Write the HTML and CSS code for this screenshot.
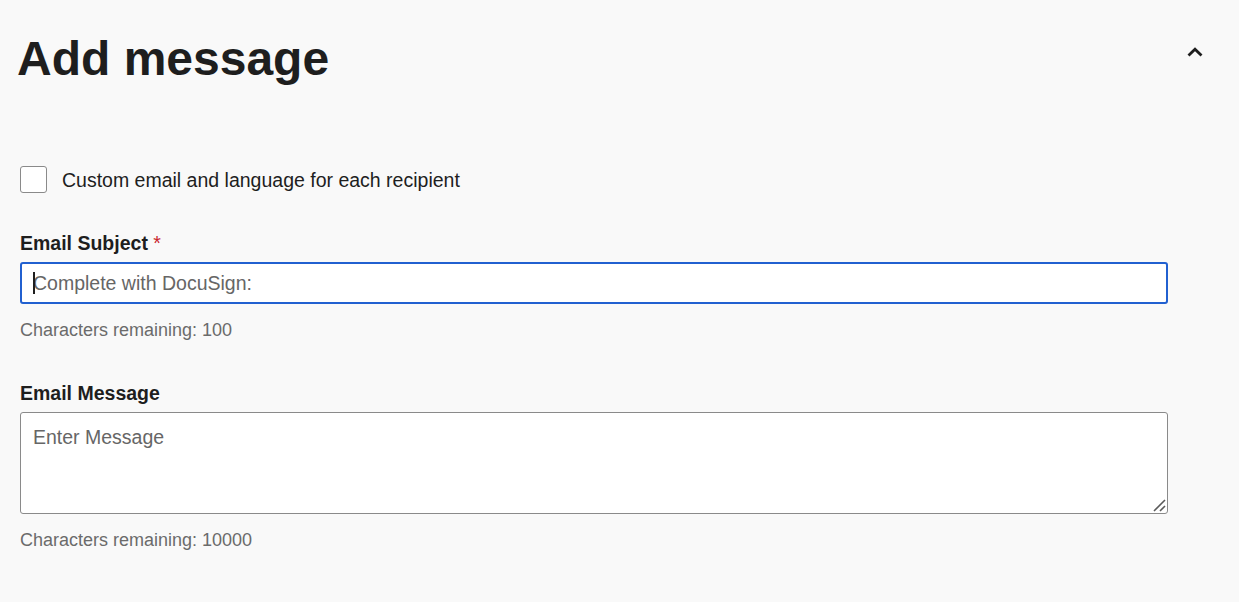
FILE: index.html
```html
<!DOCTYPE html>
<html lang="en">
<head>
<meta charset="utf-8">
<title>Add message</title>
<link rel="stylesheet" href="styles.css">
</head>
<body>
<main class="page">
  <header class="header">
    <h1 class="title">Add message</h1>
    <button class="collapse" aria-label="Collapse">
      <svg width="16" height="12" viewBox="0 0 16 12"><path d="M1.5 9.5 L8 3.2 L14.5 9.5" fill="none" stroke="#1e1e1e" stroke-width="2.8"/></svg>
    </button>
  </header>
  <section class="form">
    <label class="check-row">
      <span class="checkbox"></span>
      <span class="check-label">Custom email and language for each recipient</span>
    </label>

    <div class="field field-subject">
      <div class="label">Email Subject <span class="req">*</span></div>
      <div class="input-wrap">
        <input class="input" type="text" placeholder="Complete with DocuSign:">
        <span class="caret"></span>
      </div>
      <div class="hint">Characters remaining: 100</div>
    </div>

    <div class="field field-message">
      <div class="label">Email Message</div>
      <div class="textarea-wrap">
        <textarea class="textarea" placeholder="Enter Message"></textarea>
        <svg class="grip" width="14" height="14" viewBox="0 0 14 14"><path d="M2 13 L13 2 M8 13 L13 8" stroke="#5a5a5a" stroke-width="1.6" fill="none"/></svg>
      </div>
      <div class="hint">Characters remaining: 10000</div>
    </div>
  </section>
</main>
</body>
</html>
```

FILE: styles.css
```css
* { box-sizing: border-box; }
html, body {
  margin: 0;
  background: #f9f9f9;
  font-family: "Liberation Sans", Arial, sans-serif;
  color: #1e1e1e;
}
.page {
  width: 1239px;
  height: 602px;
  overflow: hidden;
}
.header {
  display: flex;
  align-items: center;
  justify-content: space-between;
  padding: 30px 36px 0 17px;
}
.title {
  margin: 0;
  font-size: 48px;
  line-height: 58px;
  font-weight: 700;
  color: #1e1e1e;
}
.collapse {
  border: 0;
  background: transparent;
  padding: 0;
  width: 16px;
  height: 12px;
  display: flex;
  margin-bottom: 14px;
}
.form {
  display: flex;
  flex-direction: column;
  padding: 78px 0 0 20px;
  width: 1168px;
}
.check-row {
  display: flex;
  align-items: center;
  gap: 15px;
  height: 26px;
}
.checkbox {
  width: 27px;
  height: 27px;
  border: 1px solid #8a8a8a;
  border-radius: 3px;
  background: #fff;
  flex: none;
}
.check-label {
  font-size: 19.5px;
  line-height: 26px;
  padding-top: 2px;
}
.field {
  display: flex;
  flex-direction: column;
}
.field-subject { margin-top: 39px; }
.field-message { margin-top: 40px; }
.label {
  font-size: 19.5px;
  font-weight: 700;
  line-height: 24px;
  margin-bottom: 7px;
}
.req {
  color: #c9252c;
  font-weight: 400;
}
.input-wrap,
.textarea-wrap {
  position: relative;
}
.input {
  width: 100%;
  height: 42px;
  border: 2px solid #2160d0;
  border-radius: 3px;
  background: #fff;
  padding: 0 11px;
  font-family: inherit;
  font-size: 19.5px;
  outline: none;
}
.input::placeholder,
.textarea::placeholder {
  color: #666666;
  opacity: 1;
}
.caret {
  position: absolute;
  left: 13px;
  top: 10px;
  width: 2px;
  height: 22px;
  background: #1e1e1e;
}
.hint {
  margin-top: 15px;
  font-size: 18px;
  line-height: 22px;
  color: #6b6b6b;
}
.textarea {
  width: 100%;
  height: 102px;
  border: 1px solid #8a8a8a;
  border-radius: 3px;
  background: #fff;
  padding: 12px 12px;
  font-family: inherit;
  font-size: 19.5px;
  line-height: 24px;
  outline: none;
  resize: none;
  display: block;
}
.grip {
  position: absolute;
  right: 2px;
  bottom: 2px;
}
```
